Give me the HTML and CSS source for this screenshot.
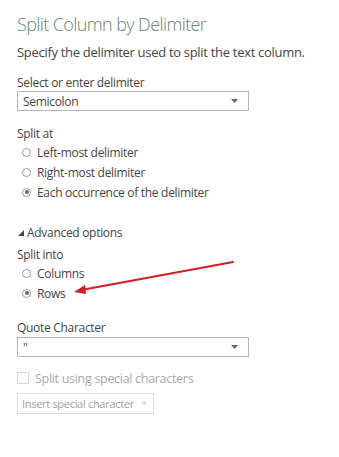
FILE: index.html
```html
<!DOCTYPE html>
<html>
<head>
<meta charset="utf-8">
<link rel="stylesheet" href="styles.css">
</head>
<body>
<div class="dialog">
  <h1 class="title">Split Column by Delimiter</h1>
  <p class="subtitle">Specify the delimiter used to split the text column.</p>

  <div class="label label-first">Select or enter delimiter</div>
  <div class="select select-first">
    <span class="select-value">Semicolon</span>
    <svg class="caret" width="7" height="4" viewBox="0 0 7 4"><polygon points="0,0 7,0 3.5,4" fill="#666"/></svg>
  </div>

  <div class="label label-split">Split at</div>
  <div class="radio-group">
    <div class="radio-row"><span class="radio"></span><span>Left-most delimiter</span></div>
    <div class="radio-row"><span class="radio"></span><span>Right-most delimiter</span></div>
    <div class="radio-row"><span class="radio checked"></span><span>Each occurrence of the delimiter</span></div>
  </div>

  <div class="label advanced">
    <svg class="tri" width="6" height="6" viewBox="0 0 6 6"><polygon points="6,0 6,6 0,6" fill="#444"/></svg>Advanced options
  </div>
  <div class="label label-into">Split into</div>
  <div class="radio-group">
    <div class="radio-row"><span class="radio"></span><span>Columns</span></div>
    <div class="radio-row"><span class="radio checked"></span><span>Rows</span></div>
  </div>

  <div class="label label-quote">Quote Character</div>
  <div class="select select-quote">
    <span class="select-value">"</span>
    <svg class="caret" width="7" height="4" viewBox="0 0 7 4"><polygon points="0,0 7,0 3.5,4" fill="#666"/></svg>
  </div>

  <div class="check-row">
    <span class="checkbox"></span><span>Split using special characters</span>
  </div>
  <div class="btn-disabled">
    <span>Insert special character</span>
    <svg class="caret-light" width="5" height="3" viewBox="0 0 5 3"><polygon points="0,0 5,0 2.5,3" fill="#ccc"/></svg>
  </div>
</div>

<svg class="annotation" width="339" height="457" viewBox="0 0 339 457">
  <line x1="233" y1="262" x2="84" y2="289.5" stroke="#d11f22" stroke-width="2" stroke-linecap="round"/>
  <polygon points="74,292 85,285 86,294" fill="#d11f22"/>
</svg>
</body>
</html>
```

FILE: styles.css
```css
html, body {
  margin: 0;
  padding: 0;
  background: #ffffff;
}

body {
  font-family: "Open Sans", "Noto Sans", sans-serif;
  color: #444;
  position: relative;
  width: 339px;
  height: 457px;
  overflow: hidden;
}

.dialog {
  padding-left: 17px;
}

.title {
  margin: 11px 0 0 0;
  font-family: "Open Sans", "Noto Sans", sans-serif;
  font-size: 18px;
  line-height: 27px;
  font-weight: 300;
  letter-spacing: -0.6px;
  color: #668572;
  white-space: nowrap;
}

.subtitle {
  margin: 4px 0 0 0;
  font-size: 13px;
  line-height: 20px;
  letter-spacing: -0.3px;
  color: #444;
  white-space: nowrap;
}

.label {
  font-size: 12px;
  line-height: 16px;
  letter-spacing: -0.3px;
  color: #444;
}

.label-first { margin-top: 13px; }
.label-split { margin-top: 15px; }
.label-into { margin-top: 6px; }
.label-quote { margin-top: 17px; }

.advanced {
  margin-top: 23px;
  display: flex;
  align-items: center;
}

.tri {
  margin: 0 3px 0 1px;
}

.select {
  height: 20px;
  width: 232px;
  border: 1px solid #b5b5b5;
  box-sizing: border-box;
  display: flex;
  align-items: center;
  justify-content: space-between;
  padding: 0 10px 0 5px;
  font-size: 12px;
  letter-spacing: -0.3px;
  color: #444;
}

.select-first { margin-top: 0; }
.select-quote { margin-top: 1px; }

.radio-group {
  margin-top: 0;
}

.radio-row {
  display: flex;
  align-items: center;
  height: 20px;
  font-size: 12px;
  letter-spacing: -0.3px;
  padding-left: 5px;
}

.radio {
  width: 9px;
  height: 9px;
  border: 1px solid #9a9a9a;
  border-radius: 50%;
  margin-right: 6px;
  box-sizing: border-box;
  position: relative;
  background: #fff;
  flex: none;
}

.radio.checked::after {
  content: "";
  position: absolute;
  left: 1.5px;
  top: 1.5px;
  width: 4px;
  height: 4px;
  border-radius: 50%;
  background: #666;
}

.check-row {
  margin-top: 11px;
  display: flex;
  align-items: center;
  height: 20px;
  font-size: 12.5px;
  letter-spacing: -0.3px;
  color: #a8a8a8;
  white-space: nowrap;
}

.checkbox {
  width: 12px;
  height: 12px;
  border: 1px solid #d6d6d6;
  box-sizing: border-box;
  margin-right: 6px;
  flex: none;
}

.btn-disabled {
  margin-top: 5px;
  width: 137px;
  height: 21px;
  box-sizing: border-box;
  border: 1px solid #dcdcdc;
  display: flex;
  align-items: center;
  padding: 0 0 0 4px;
  font-size: 11px;
  letter-spacing: -0.3px;
  color: #a0a0a0;
  white-space: nowrap;
}

.caret-light {
  margin-left: 8px;
}

.annotation {
  position: absolute;
  left: 0;
  top: 0;
  pointer-events: none;
}
```
